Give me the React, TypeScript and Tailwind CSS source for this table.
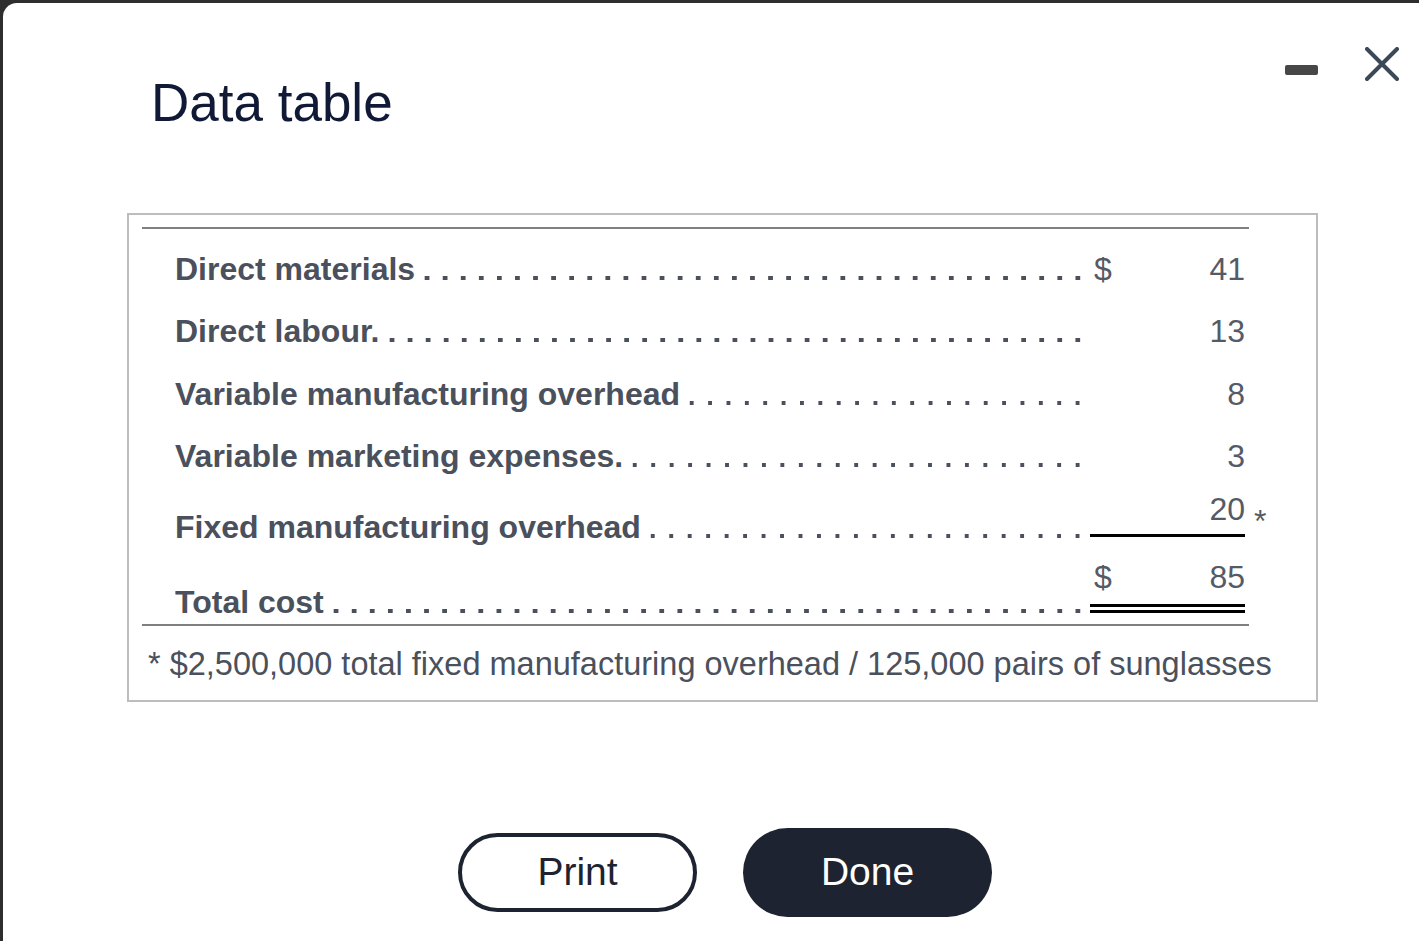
import type { ReactNode } from "react";

type Row = {
  label: string;
  dollar?: boolean;
  value: string;
  rule?: "single" | "double";
  note?: boolean;
  spacing: string;
};

const rows: Row[] = [
  { label: "Direct materials", dollar: true, value: "41", spacing: "mt-[22px]" },
  { label: "Direct labour.", value: "13", spacing: "mt-[26px]" },
  { label: "Variable manufacturing overhead", value: "8", spacing: "mt-[27px]" },
  { label: "Variable marketing expenses.", value: "3", spacing: "mt-[26px]" },
  { label: "Fixed manufacturing overhead", value: "20", rule: "single", note: true, spacing: "mt-[17px]" },
  { label: "Total cost", dollar: true, value: "85", rule: "double", spacing: "mt-[14px]" },
];

// dotted leader: whole dots only, spread to fill the gap before the amount column
function Leader() {
  return (
    <div className="mb-[7px] ml-[3px] mr-[3px] h-[4px] flex-1 bg-[linear-gradient(to_right,transparent_7px,#4a505c_7px,#4a505c_11px,transparent_11px)] bg-[length:18px_4px] bg-repeat-space" />
  );
}

function AmountCell(props: { row: Row }) {
  const { row } = props;
  let ruleClass = "";
  if (row.rule === "single") ruleClass = "pb-[7px] border-b-[3px] border-black mb-[8px]";
  if (row.rule === "double") ruleClass = "pb-[9px] border-b-[9px] border-double border-black mb-[7px]";

  return (
    <div className={"relative flex w-[155px] justify-between pl-[4px] font-normal text-[#555b66] " + ruleClass}>
      <span>{row.dollar ? "$" : ""}</span>
      <span>{row.value}</span>
      {row.note && <span className="absolute left-full top-[12px] ml-[9px]">*</span>}
    </div>
  );
}

function TableRow(props: { row: Row }) {
  return (
    <div className={"flex items-end pl-[33px] pr-[4px] " + props.row.spacing}>
      <span className="whitespace-nowrap">{props.row.label}</span>
      <Leader />
      <AmountCell row={props.row} />
    </div>
  );
}

function Button(props: { dark?: boolean; children: ReactNode }) {
  if (props.dark) {
    return (
      <button className="flex h-[89px] w-[249px] items-center justify-center rounded-full bg-[#1d2330] text-[39px] text-white">
        {props.children}
      </button>
    );
  }
  return (
    <button className="flex h-[79px] w-[239px] items-center justify-center rounded-full border-[4px] border-[#1d2330] bg-white text-[39px] text-[#1d2330]">
      {props.children}
    </button>
  );
}

export default function App() {
  return (
    <div className="h-[941px] w-full overflow-hidden bg-[#2e2e2e] pl-[3px] pt-[3px]">
      <div className="h-full rounded-tl-[14px] bg-white font-['Liberation_Sans',Arial,sans-serif]">
        <div className="flex items-start justify-between">
          <h1 className="pl-[148px] pt-[73px] text-[53px] leading-[53px] text-[#101a36]">Data table</h1>
          <div className="flex items-start gap-[47px] pr-[20px] pt-[44px]">
            <span className="mt-[18px] h-[10px] w-[33px] rounded-[2px] bg-[#474747]" />
            <svg width="34" height="34" viewBox="0 0 34 34" className="text-[#3b4858]">
              <path d="M2 2 L32 32 M32 2 L2 32" stroke="currentColor" strokeWidth="4" strokeLinecap="round" />
            </svg>
          </div>
        </div>

        <div className="ml-[124px] mt-[84px] w-[1191px] border-2 border-[#bdbdbd] pb-[18px] pl-[13px] pt-[12px]">
          <div className="w-[1107px] border-t-2 border-[#808080] text-[32px] font-bold leading-[36px] text-[#4a505c]">
            {rows.map(function (row) {
              return <TableRow key={row.label} row={row} />;
            })}
          </div>
          <div className="mt-[4px] w-[1107px] border-t-2 border-[#808080]" />
          <p className="mt-[20px] whitespace-nowrap pl-[6px] text-[32.5px] leading-[36px] text-[#4a505c]">
            * $2,500,000 total fixed manufacturing overhead / 125,000 pairs of sunglasses
          </p>
        </div>

        <div className="ml-[455px] mt-[126px] flex items-center gap-[46px]">
          <Button>Print</Button>
          <Button dark>Done</Button>
        </div>
      </div>
    </div>
  );
}
